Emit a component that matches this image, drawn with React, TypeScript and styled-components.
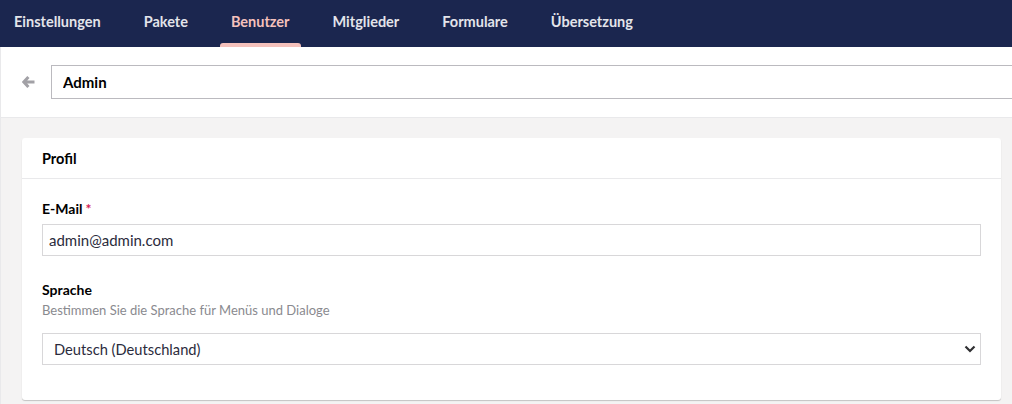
import React from 'react';
import styled, { createGlobalStyle } from 'styled-components';

const GlobalStyle = createGlobalStyle`
  html, body {
    margin: 0;
    padding: 0;
    background: #f4f3f3;
    font-family: Lato, "Open Sans", sans-serif;
    color: #1b264f;
  }
  * { box-sizing: border-box; }
`;

const Page = styled.div`
  display: flex;
  flex-direction: column;
  height: 404px;
  overflow: hidden;
`;

const TopBar = styled.nav`
  display: flex;
  align-items: stretch;
  height: 47px;
  padding-left: 3px;
  gap: 21px;
  background: #1b264f;
  flex-shrink: 0;
`;

const Section = styled.a<{ $active?: boolean }>`
  position: relative;
  display: flex;
  align-items: center;
  padding: 0 11px 4px;
  font-size: 14.5px;
  font-weight: 700;
  color: ${(p) => (p.$active ? '#f5c1bc' : '#e3e4ea')};
  text-decoration: none;
  cursor: pointer;

  &::after {
    content: '';
    display: ${(p) => (p.$active ? 'block' : 'none')};
    position: absolute;
    left: 0;
    right: 0;
    bottom: 0;
    height: 4px;
    border-radius: 3px 3px 0 0;
    background: #f5c1bc;
  }
`;

const Header = styled.header`
  display: flex;
  align-items: center;
  gap: 14px;
  height: 71px;
  padding: 0 0 0 21px;
  background: #fff;
  border-left: 1px solid #e9e9eb;
  border-bottom: 1px solid #e9e9eb;
  flex-shrink: 0;
`;

const BackButton = styled.button`
  display: flex;
  align-items: center;
  justify-content: flex-start;
  width: 15px;
  height: 16px;
  padding: 0;
  border: 0;
  background: none;
  color: #a2a1a6;
  cursor: pointer;
`;

const NameInput = styled.input`
  flex: 1;
  height: 34px;
  margin-right: -10px;
  padding: 0 11px;
  border: 1px solid #bbbabf;
  font-family: inherit;
  font-size: 15px;
  font-weight: 700;
  color: #000;
  background: #fff;
  outline: none;
`;

const Content = styled.main`
  flex: 1;
  padding: 20px 11px 0 21px;
  border-left: 1px solid #e9e9eb;
`;

const Card = styled.section`
  background: #fff;
  border-radius: 3px;
  box-shadow: 0 1px 1px rgba(0, 0, 0, 0.2);
`;

const CardHeader = styled.div`
  display: flex;
  align-items: center;
  height: 41px;
  padding: 0 20px;
  border-bottom: 1px solid #e9e9eb;
  font-size: 14.5px;
  font-weight: 700;
  color: #000;
`;

const CardBody = styled.div`
  display: flex;
  flex-direction: column;
  gap: 24px;
  padding: 20px 20px 35px;
`;

const Field = styled.div`
  display: flex;
  flex-direction: column;
`;

const Label = styled.label`
  font-size: 14px;
  font-weight: 700;
  color: #000;
  line-height: 20px;
  margin-bottom: 5px;
`;

const Required = styled.span`
  color: #d42054;
  margin-left: 3px;
`;

const Description = styled.div`
  font-size: 13px;
  color: #8a8a8f;
  line-height: 18px;
  margin-top: -4px;
  margin-bottom: 14px;
`;

const TextInput = styled.input`
  height: 32px;
  padding: 0 6px;
  border: 1px solid #d8d7d9;
  font-family: inherit;
  font-size: 15px;
  color: #2b2b3c;
  background: #fff;
  outline: none;
`;

const SelectWrap = styled.div`
  position: relative;
  display: flex;
`;

const Select = styled.select`
  flex: 1;
  height: 32px;
  padding: 0 11px;
  border: 1px solid #d8d7d9;
  border-radius: 0;
  font-family: inherit;
  font-size: 14.7px;
  color: #2b2b3c;
  background: #fff;
  appearance: none;
  outline: none;
`;

const Chevron = styled.svg`
  position: absolute;
  right: 5px;
  top: 50%;
  transform: translateY(-50%);
  pointer-events: none;
`;

const sections = ['Einstellungen', 'Pakete', 'Benutzer', 'Mitglieder', 'Formulare', 'Übersetzung'];

export default function App() {
  return (
    <Page>
      <GlobalStyle />
      <TopBar>
        {sections.map((s) => (
          <Section key={s} $active={s === 'Benutzer'}>
            {s}
          </Section>
        ))}
      </TopBar>
      <Header>
        <BackButton aria-label="Zurück">
          <svg width="13" height="12" viewBox="0 0 13 12" fill="none">
            <path
              d="M6.4 1 L1.8 6 L6.4 11 M2 6 H12.5"
              stroke="currentColor"
              strokeWidth="3"
              strokeLinejoin="miter"
            />
          </svg>
        </BackButton>
        <NameInput defaultValue="Admin" />
      </Header>
      <Content>
        <Card>
          <CardHeader>Profil</CardHeader>
          <CardBody>
            <Field>
              <Label>
                E-Mail<Required>*</Required>
              </Label>
              <TextInput defaultValue="admin@admin.com" />
            </Field>
            <Field>
              <Label>Sprache</Label>
              <Description>Bestimmen Sie die Sprache für Menüs und Dialoge</Description>
              <SelectWrap>
                <Select defaultValue="de-DE">
                  <option value="de-DE">Deutsch (Deutschland)</option>
                  <option value="en-US">English (United States)</option>
                </Select>
                <Chevron width="12" height="8" viewBox="0 0 12 8" fill="none">
                  <path d="M1.5 1.5 L6 6 L10.5 1.5" stroke="#303033" strokeWidth="2.2" />
                </Chevron>
              </SelectWrap>
            </Field>
          </CardBody>
        </Card>
      </Content>
    </Page>
  );
}
